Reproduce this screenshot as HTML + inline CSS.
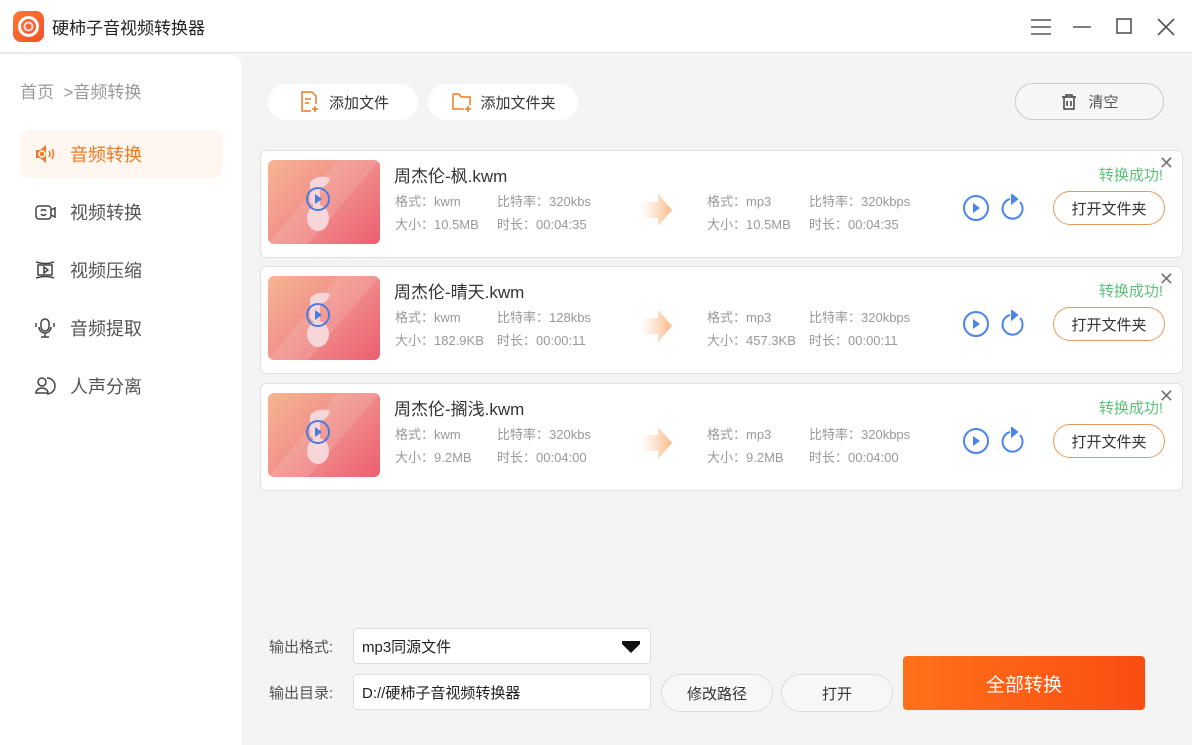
<!DOCTYPE html>
<html><head><meta charset="utf-8"><style>
*{margin:0;padding:0;box-sizing:border-box}
body{width:1192px;height:745px;overflow:hidden;background:#f4f4f4;font-family:"Liberation Sans","Noto Sans CJK SC",sans-serif;position:relative;color:#333}
.abs{position:absolute}
.title{left:0;top:0;width:1192px;height:53px;background:#fff;border-bottom:1px solid #e2e2e2}
.side{left:0;top:55px;width:241px;height:690px;background:#fff;border-top-right-radius:10px}
.nav{left:20px;width:203px;height:48px;font-size:18px;color:#555;display:flex;align-items:center;padding-left:14px}
.nav svg{margin-right:14px}
.pill{background:#fff;border-radius:18px;height:36px;display:flex;align-items:center;justify-content:center;font-size:15px;color:#333}
.card{left:260px;width:923px;height:108px;background:#fff;border:1px solid #e0e0e0;border-radius:6px}
.thumb{position:absolute;left:8px;top:10px;width:112px;height:84px;border-radius:6px;background:linear-gradient(135deg,#f6b592 0%,#f08a88 55%,#ec5e72 100%);overflow:hidden}
.fn{position:absolute;left:134px;top:12px;font-size:17px;color:#333}
.meta{position:absolute;font-size:13px;color:#999}
.ok{position:absolute;right:20px;top:14px;font-size:15px;color:#5fc07a}
.x{position:absolute;right:9px;top:3px;font-size:18px;color:#777}
.of{position:absolute;right:18px;top:41px;width:112px;height:34px;border:1px solid #e69a5a;border-radius:17px;font-size:15px;display:flex;align-items:center;justify-content:center;color:#333}
.inp{background:#fff;border:1px solid #ddd;border-radius:4px;height:36px;font-size:15px;display:flex;align-items:center;padding-left:8px;color:#222}
.rb{border:1px solid #ddd;border-radius:20px;height:38px;font-size:15px;display:flex;align-items:center;justify-content:center;color:#333;background:#f7f7f7}
</style></head><body>
<div class="abs title"></div>
<div class="abs" style="left:13px;top:11px;width:31px;height:31px;border-radius:8px;background:linear-gradient(135deg,#ff7a30,#f0502a)">
<svg width="31" height="31"><circle cx="15.5" cy="15.5" r="9" fill="none" stroke="#fff" stroke-width="3"/><circle cx="15.5" cy="15.5" r="4" fill="none" stroke="#fde" stroke-width="2"/></svg></div>
<div class="abs" style="left:52px;top:14px;font-size:17px;color:#222">硬柿子音视频转换器</div>
<svg class="abs" style="left:1028px;top:17px" width="150" height="22" stroke="#555" stroke-width="1.6" fill="none">
<path d="M3 3h20M3 10h20M3 17h20"/><path d="M45 10h18"/><rect x="89" y="2" width="14" height="14"/><path d="M130 2l16 16M146 2l-16 16"/></svg>
<div class="abs side"></div>
<div class="abs" style="left:20px;top:78px;font-size:17px;color:#999">首页 &nbsp;&gt;音频转换</div>
<div class="abs nav" style="top:130px;background:#fff6ef;border-radius:10px;color:#f07a24">
<svg width="22" height="22" viewBox="0 0 22 22"><path d="M2 7h4l6-5v18l-6-5H2z" fill="#f07a24"/><circle cx="8" cy="11" r="3" fill="none" stroke="#fff" stroke-width="1.5"/><path d="M15 8q2 3 0 6M18 6q3 5 0 10" stroke="#f07a24" fill="none" stroke-width="1.5"/></svg>音频转换</div>
<div class="abs nav" style="top:188px"><svg width="22" height="22" fill="none" stroke="#444" stroke-width="1.5"><rect x="2" y="5" width="15" height="13" rx="3"/><path d="M17 9l4-2v9l-4-2"/><path d="M7 10a3 3 0 015 0M12 13a3 3 0 01-5 0"/></svg>视频转换</div>
<div class="abs nav" style="top:246px"><svg width="22" height="22" fill="none" stroke="#444" stroke-width="1.5"><path d="M2 3q10 3 18 0M2 19q10-3 18 0"/><rect x="4" y="6" width="14" height="10"/><path d="M10 8l4 3-4 3z"/></svg>视频压缩</div>
<div class="abs nav" style="top:304px"><svg width="22" height="22" fill="none" stroke="#444" stroke-width="1.5"><rect x="7" y="2" width="8" height="12" rx="4"/><path d="M5 10a6 6 0 0012 0M11 16v4M7 20h8M2 6v4M20 6v4"/></svg>音频提取</div>
<div class="abs nav" style="top:362px"><svg width="22" height="22" fill="none" stroke="#444" stroke-width="1.5"><circle cx="8" cy="7" r="4"/><path d="M2 18a6 5 0 0112 0z"/><path d="M13 3a8 8 0 010 16"/></svg>人声分离</div>

<div class="abs pill" style="left:268px;top:84px;width:150px"><svg width="24" height="24" fill="none" stroke="#f07a24" stroke-width="1.5" style="margin-right:8px"><path d="M15 2H5v19h9"/><path d="M15 2l4 4v8"/><path d="M8 9h6M8 13h4M18 16v6M15 19h6"/></svg>添加文件</div>
<div class="abs pill" style="left:428px;top:84px;width:150px"><svg width="24" height="24" fill="none" stroke="#f07a24" stroke-width="1.5" style="margin-right:6px"><path d="M3 4h6l2 3h9v8M3 4v15h11"/><path d="M18 16v6M15 19h6"/></svg>添加文件夹</div>
<div class="abs pill" style="left:1015px;top:83px;width:149px;height:37px;border:1px solid #ccc;background:#f6f6f6;color:#555"><svg width="18" height="18" fill="none" stroke="#444" stroke-width="1.5" style="margin-right:10px"><path d="M2 4h14M6 4V2h6v2M4 4v12h10V4M7 8v5M11 8v5"/></svg>清空</div>

<div class="abs card" style="top:150px"></div>
<div class="abs card" style="top:266px"></div>
<div class="abs card" style="top:383px"></div>

<div class="abs" style="left:260px;top:150px;width:923px;height:108px">
<div class="thumb"><svg width="112" height="84"><path d="M0 84L70 0h42L40 84z" fill="#fff" opacity=".12"/><ellipse cx="50" cy="58" rx="11" ry="13" fill="#f6d6d8"/><path d="M42 42V22q8-8 20-4q-2 8-10 10v24" fill="#f6d6d8"/><circle cx="50" cy="39" r="11" fill="none" stroke="#4a7be0" stroke-width="2"/><path d="M47 34l7 5-7 5z" fill="#4a7be0"/></svg></div>
<div class="fn">周杰伦-枫.kwm</div>
<div class="meta" style="left:135px;top:41px">格式：kwm</div><div class="meta" style="left:237px;top:41px">比特率：320kbs</div>
<div class="meta" style="left:135px;top:64px">大小：10.5MB</div><div class="meta" style="left:237px;top:64px">时长：00:04:35</div>
<svg class="abs" style="left:380px;top:44px" width="36" height="36"><defs><linearGradient id="g1"><stop offset="0" stop-color="#fbd0ad" stop-opacity="0"/><stop offset="1" stop-color="#fbb883"/></linearGradient></defs><path d="M0 8h18V0l14 16-14 16v-8H0z" fill="url(#g1)"/></svg>
<div class="meta" style="left:447px;top:41px">格式：mp3</div><div class="meta" style="left:549px;top:41px">比特率：320kbps</div>
<div class="meta" style="left:447px;top:64px">大小：10.5MB</div><div class="meta" style="left:549px;top:64px">时长：00:04:35</div>
<svg class="abs" style="left:702px;top:44px" width="66" height="28" fill="none" stroke="#4a86e8" stroke-width="2"><circle cx="14" cy="14" r="12"/><path d="M11 9l7 5-7 5z" fill="#4a86e8" stroke="none"/><path d="M58 8a10 10 0 11-10-3"/><path d="M50 1l5 4-5 4z" fill="#4a86e8"/></svg>
<div class="ok">转换成功!</div><div class="x">✕</div><div class="of">打开文件夹</div>
</div>

<div class="abs" style="left:260px;top:266px;width:923px;height:108px">
<div class="thumb"><svg width="112" height="84"><path d="M0 84L70 0h42L40 84z" fill="#fff" opacity=".12"/><ellipse cx="50" cy="58" rx="11" ry="13" fill="#f6d6d8"/><path d="M42 42V22q8-8 20-4q-2 8-10 10v24" fill="#f6d6d8"/><circle cx="50" cy="39" r="11" fill="none" stroke="#4a7be0" stroke-width="2"/><path d="M47 34l7 5-7 5z" fill="#4a7be0"/></svg></div>
<div class="fn">周杰伦-晴天.kwm</div>
<div class="meta" style="left:135px;top:41px">格式：kwm</div><div class="meta" style="left:237px;top:41px">比特率：128kbs</div>
<div class="meta" style="left:135px;top:64px">大小：182.9KB</div><div class="meta" style="left:237px;top:64px">时长：00:00:11</div>
<svg class="abs" style="left:380px;top:44px" width="36" height="36"><path d="M0 8h18V0l14 16-14 16v-8H0z" fill="url(#g1)"/></svg>
<div class="meta" style="left:447px;top:41px">格式：mp3</div><div class="meta" style="left:549px;top:41px">比特率：320kbps</div>
<div class="meta" style="left:447px;top:64px">大小：457.3KB</div><div class="meta" style="left:549px;top:64px">时长：00:00:11</div>
<svg class="abs" style="left:702px;top:44px" width="66" height="28" fill="none" stroke="#4a86e8" stroke-width="2"><circle cx="14" cy="14" r="12"/><path d="M11 9l7 5-7 5z" fill="#4a86e8" stroke="none"/><path d="M58 8a10 10 0 11-10-3"/><path d="M50 1l5 4-5 4z" fill="#4a86e8"/></svg>
<div class="ok">转换成功!</div><div class="x">✕</div><div class="of">打开文件夹</div>
</div>

<div class="abs" style="left:260px;top:383px;width:923px;height:108px">
<div class="thumb"><svg width="112" height="84"><path d="M0 84L70 0h42L40 84z" fill="#fff" opacity=".12"/><ellipse cx="50" cy="58" rx="11" ry="13" fill="#f6d6d8"/><path d="M42 42V22q8-8 20-4q-2 8-10 10v24" fill="#f6d6d8"/><circle cx="50" cy="39" r="11" fill="none" stroke="#4a7be0" stroke-width="2"/><path d="M47 34l7 5-7 5z" fill="#4a7be0"/></svg></div>
<div class="fn">周杰伦-搁浅.kwm</div>
<div class="meta" style="left:135px;top:41px">格式：kwm</div><div class="meta" style="left:237px;top:41px">比特率：320kbs</div>
<div class="meta" style="left:135px;top:64px">大小：9.2MB</div><div class="meta" style="left:237px;top:64px">时长：00:04:00</div>
<svg class="abs" style="left:380px;top:44px" width="36" height="36"><path d="M0 8h18V0l14 16-14 16v-8H0z" fill="url(#g1)"/></svg>
<div class="meta" style="left:447px;top:41px">格式：mp3</div><div class="meta" style="left:549px;top:41px">比特率：320kbps</div>
<div class="meta" style="left:447px;top:64px">大小：9.2MB</div><div class="meta" style="left:549px;top:64px">时长：00:04:00</div>
<svg class="abs" style="left:702px;top:44px" width="66" height="28" fill="none" stroke="#4a86e8" stroke-width="2"><circle cx="14" cy="14" r="12"/><path d="M11 9l7 5-7 5z" fill="#4a86e8" stroke="none"/><path d="M58 8a10 10 0 11-10-3"/><path d="M50 1l5 4-5 4z" fill="#4a86e8"/></svg>
<div class="ok">转换成功!</div><div class="x">✕</div><div class="of">打开文件夹</div>
</div>

<div class="abs" style="left:269px;top:636px;font-size:15px;color:#555">输出格式:</div>
<div class="abs inp" style="left:353px;top:628px;width:298px">mp3同源文件<svg style="position:absolute;right:10px;top:12px" width="18" height="12"><path d="M0 0h18v3L9 12 0 3z" fill="#111"/></svg></div>
<div class="abs" style="left:269px;top:682px;font-size:15px;color:#555">输出目录:</div>
<div class="abs inp" style="left:353px;top:674px;width:298px">D://硬柿子音视频转换器</div>
<div class="abs rb" style="left:661px;top:674px;width:112px">修改路径</div>
<div class="abs rb" style="left:781px;top:674px;width:112px">打开</div>
<div class="abs" style="left:903px;top:656px;width:242px;height:54px;border-radius:4px;background:linear-gradient(90deg,#ff7119,#fb4d12);color:#fff;font-size:19px;display:flex;align-items:center;justify-content:center">全部转换</div>
</body></html>
